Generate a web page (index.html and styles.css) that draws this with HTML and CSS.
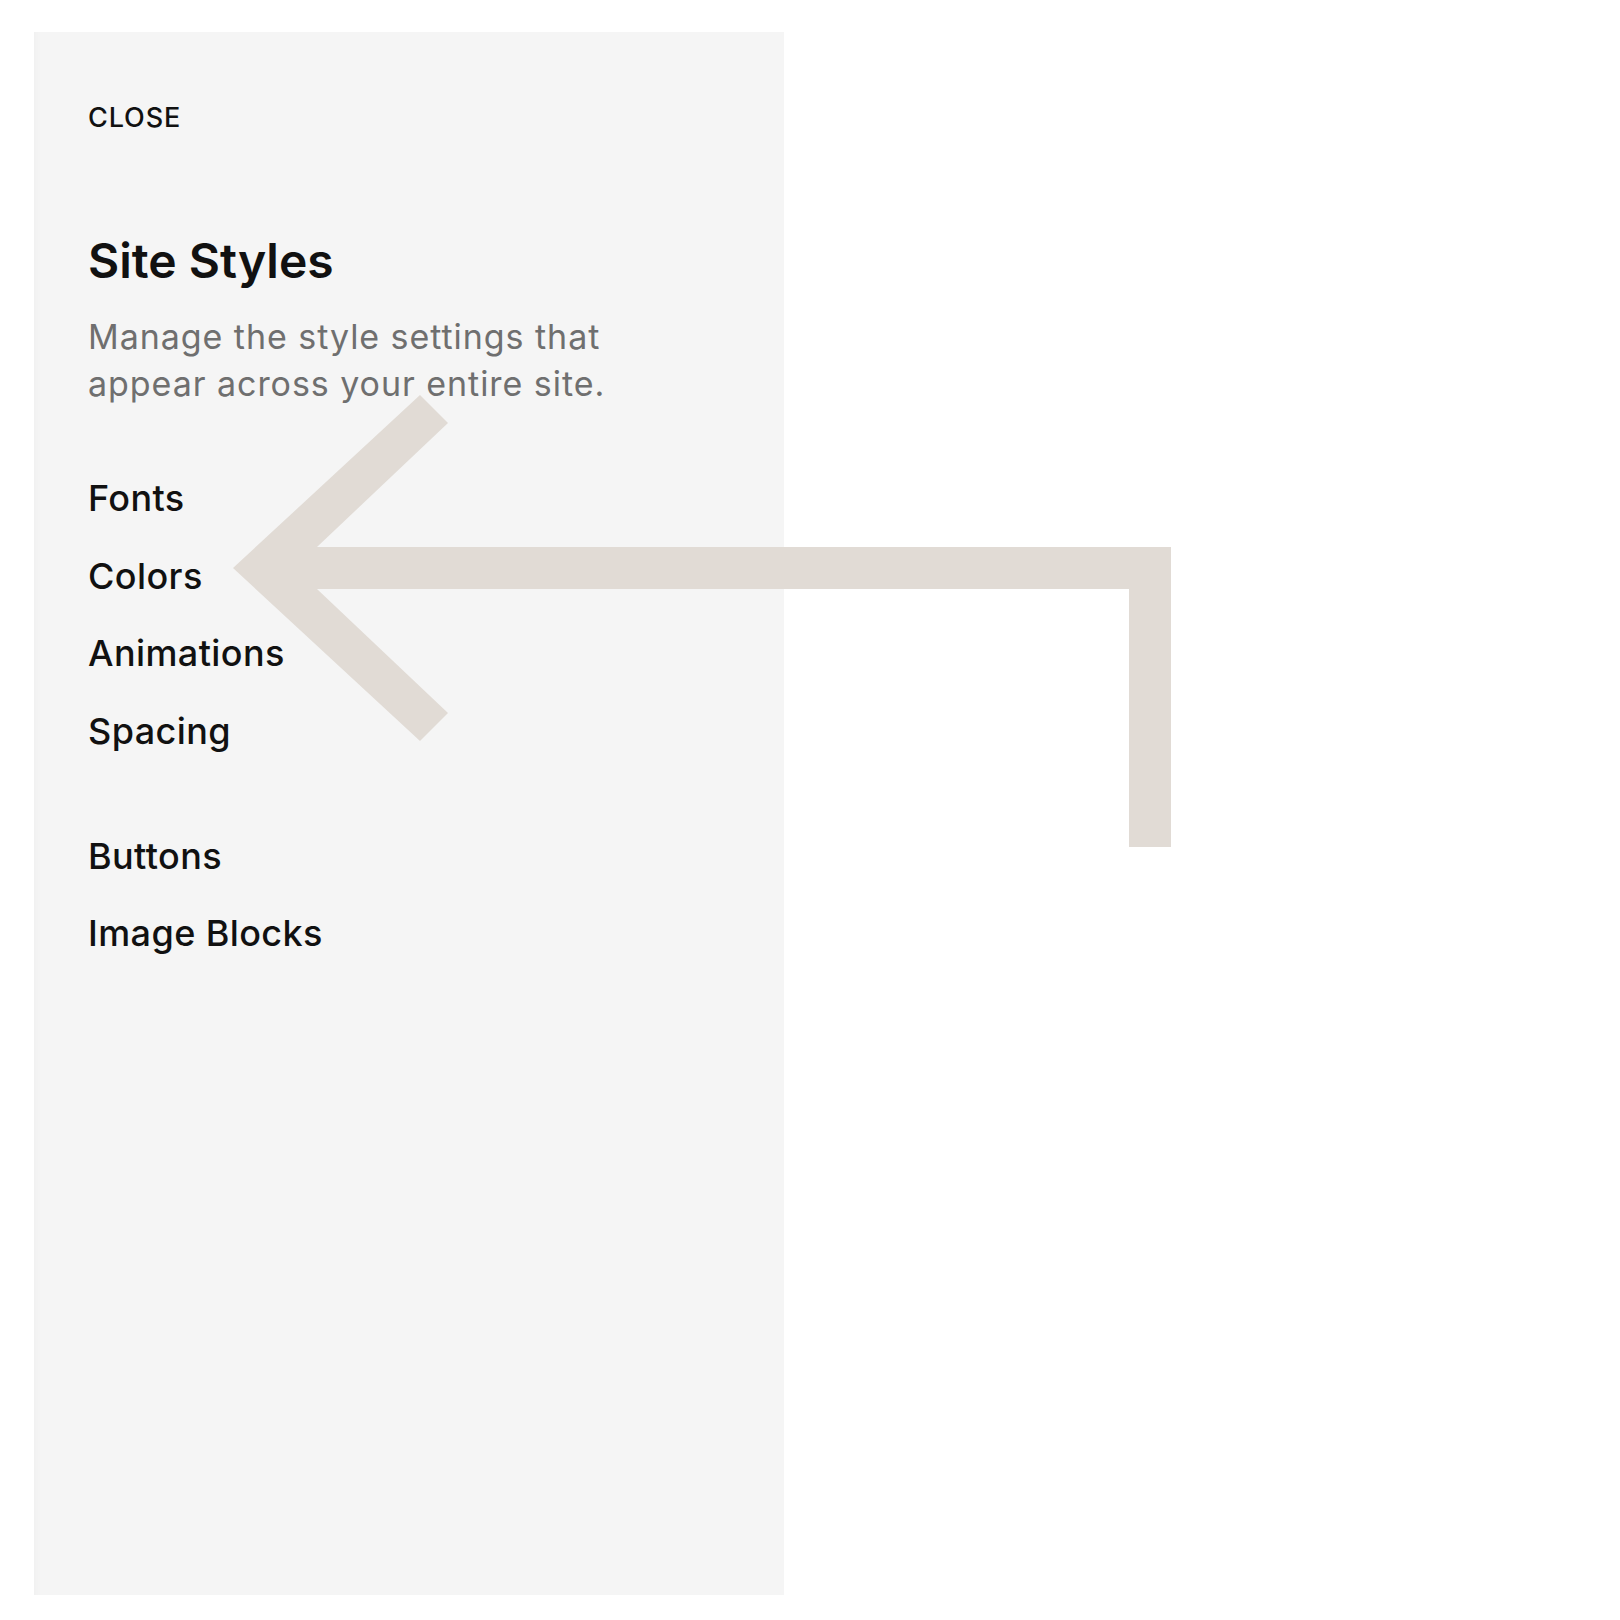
FILE: index.html
```html
<!DOCTYPE html>
<html lang="en">
<head>
    <meta charset="UTF-8">
    <meta name="viewport" content="width=device-width, initial-scale=1.0">
    <title>Site Styles</title>
    <link rel="stylesheet" href="styles.css">
</head>
<body>
    <aside class="panel">
        <a href="#" class="close-link">CLOSE</a>
        <h1 class="panel-title">Site Styles</h1>
        <p class="panel-desc">Manage the style settings that appear across your entire site.</p>

        <nav class="menu">
            <ul class="menu-group">
                <li><a href="#">Fonts</a></li>
                <li><a href="#">Colors</a></li>
                <li><a href="#">Animations</a></li>
                <li><a href="#">Spacing</a></li>
            </ul>
            <ul class="menu-group">
                <li><a href="#">Buttons</a></li>
                <li><a href="#">Image Blocks</a></li>
            </ul>
        </nav>
    </aside>

    <!-- pointer arrow laid over the page -->
    <svg class="pointer" width="1620" height="1620" viewBox="0 0 1620 1620" aria-hidden="true">
        <polygon points="420,395 448,423 317,547 1171,547 1171,847 1129,847 1129,589 317,589 448,713 420,741 233,568" fill="#e1dbd5"/>
    </svg>
</body>
</html>
```

FILE: styles.css
```css
body {
    font-family: Inter, "Liberation Sans", Arial, sans-serif;
    background-color: #fff;
    color: #111;
    margin: 0;
    padding: 32px 0 25px 34px;
    position: relative;
    min-height: 1620px;
    box-sizing: border-box;
}
.panel {
    width: 750px;
    height: 1563px;
    box-sizing: border-box;
    padding: 70px 40px 0 54px;
    background-color: #f5f5f5;
    box-shadow: inset 8px 0 8px -8px rgba(0, 0, 0, 0.04); /* leve sombra na borda esquerda */
    display: flex;
    flex-direction: column;
}
.close-link {
    font-size: 27px;
    line-height: 32px;
    font-weight: 500;
    letter-spacing: 0.9px;
    color: #111;
    text-decoration: none;
    align-self: flex-start;
}
.panel-title {
    font-size: 48px;
    line-height: 58px;
    font-weight: 600;
    letter-spacing: 0;
    margin: 98px 0 0;
}
.panel-desc {
    font-size: 34px;
    line-height: 47px;
    letter-spacing: 0.95px;
    color: #6f6f6f;
    margin: 23px 0 0;
    max-width: 570px;
}
.menu {
    margin-top: 69px;
    display: flex;
    flex-direction: column;
    gap: 81px; /* espaço extra entre os dois grupos */
}
.menu-group {
    list-style: none;
    margin: 0;
    padding: 0;
    display: flex;
    flex-direction: column;
    gap: 33.5px;
}
.menu-group a {
    display: inline-block;
    font-size: 36px;
    line-height: 44px;
    font-weight: 500;
    letter-spacing: 0.4px;
    color: #111;
    text-decoration: none;
}
.pointer {
    position: absolute;
    top: 0;
    left: 0;
    pointer-events: none;
}
```
